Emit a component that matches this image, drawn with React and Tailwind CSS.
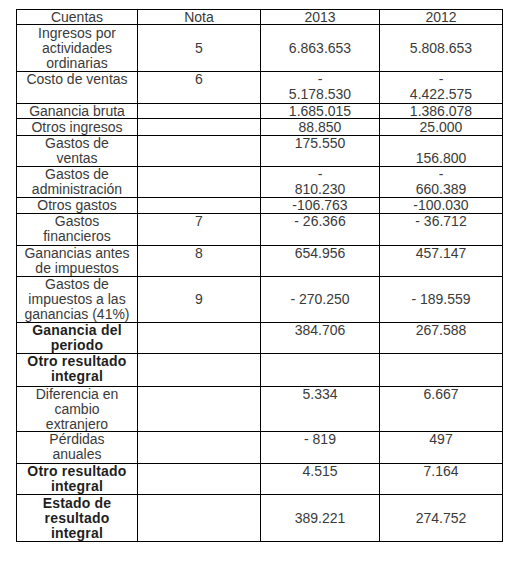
const ROWS = [
  { h: 15, cells: ["Cuentas", "Nota", "2013", "2012"], align: "m" },
  { h: 47, cells: ["Ingresos por\nactividades\nordinarias", "5", "6.863.653", "5.808.653"], align: "m" },
  { h: 32, cells: ["Costo de ventas", "6", "-\n5.178.530", "-\n4.422.575"], align: "t" },
  { h: 15, cells: ["Ganancia bruta", "", "1.685.015", "1.386.078"], align: "m" },
  { h: 17, cells: ["Otros ingresos", "", "88.850", "25.000"], align: "m" },
  { h: 31, cells: ["Gastos de\nventas", "", "175.550", "\u00a0\n156.800"], align: "t" },
  { h: 31, cells: ["Gastos de\nadministración", "", "-\n810.230", "-\n660.389"], align: "t" },
  { h: 16, cells: ["Otros gastos", "", "-106.763", "-100.030"], align: "m" },
  { h: 32, cells: ["Gastos\nfinancieros", "7", "- 26.366", "- 36.712"], align: "t" },
  { h: 31, cells: ["Ganancias antes\nde impuestos", "8", "654.956", "457.147"], align: "t" },
  { h: 46, cells: ["Gastos de\nimpuestos a las\nganancias (41%)", "9", "- 270.250", "- 189.559"], align: "m" },
  { h: 31, cells: ["Ganancia del\nperiodo", "", "384.706", "267.588"], align: "t", bold: true },
  { h: 33, cells: ["Otro resultado\nintegral", "", "", ""], align: "t", bold: true },
  { h: 45, cells: ["Diferencia en\ncambio\nextranjero", "", "5.334", "6.667"], align: "t" },
  { h: 32, cells: ["Pérdidas\nanuales", "", "- 819", "497"], align: "t" },
  { h: 31, cells: ["Otro resultado\nintegral", "", "4.515", "7.164"], align: "t", bold: true },
  { h: 47, cells: ["Estado de\nresultado\nintegral", "", "389.221", "274.752"], align: "m", bold: true },
];

export default function App() {
  return (
    <div className="w-[523px] h-[577px] bg-white pt-[9px] pl-[16px] font-['Liberation_Sans',Arial,sans-serif]">
      <table className="table-fixed border-collapse w-[486px] text-[14px] leading-[15px] text-[#3a3a3a]">
        <colgroup>
          <col className="w-[121px]" />
          <col className="w-[123px]" />
          <col className="w-[119px]" />
          <col className="w-[123px]" />
        </colgroup>
        <tbody>
          {ROWS.map((r, i) => (
            <tr key={i}>
              {r.cells.map((c, j) => (
                <td key={j} className="border border-black p-0 text-center">
                  <div
                    className={`flex flex-col overflow-hidden whitespace-pre-line ${
                      r.align === "t" ? "justify-start" : "justify-center"
                    } ${r.bold && j === 0 ? "font-bold text-[#1f1f1f] tracking-[0.2px]" : ""}`}
                    style={{ height: r.h - 1 }}
                  >
                    {c}
                  </div>
                </td>
              ))}
            </tr>
          ))}
        </tbody>
      </table>
    </div>
  );
}
